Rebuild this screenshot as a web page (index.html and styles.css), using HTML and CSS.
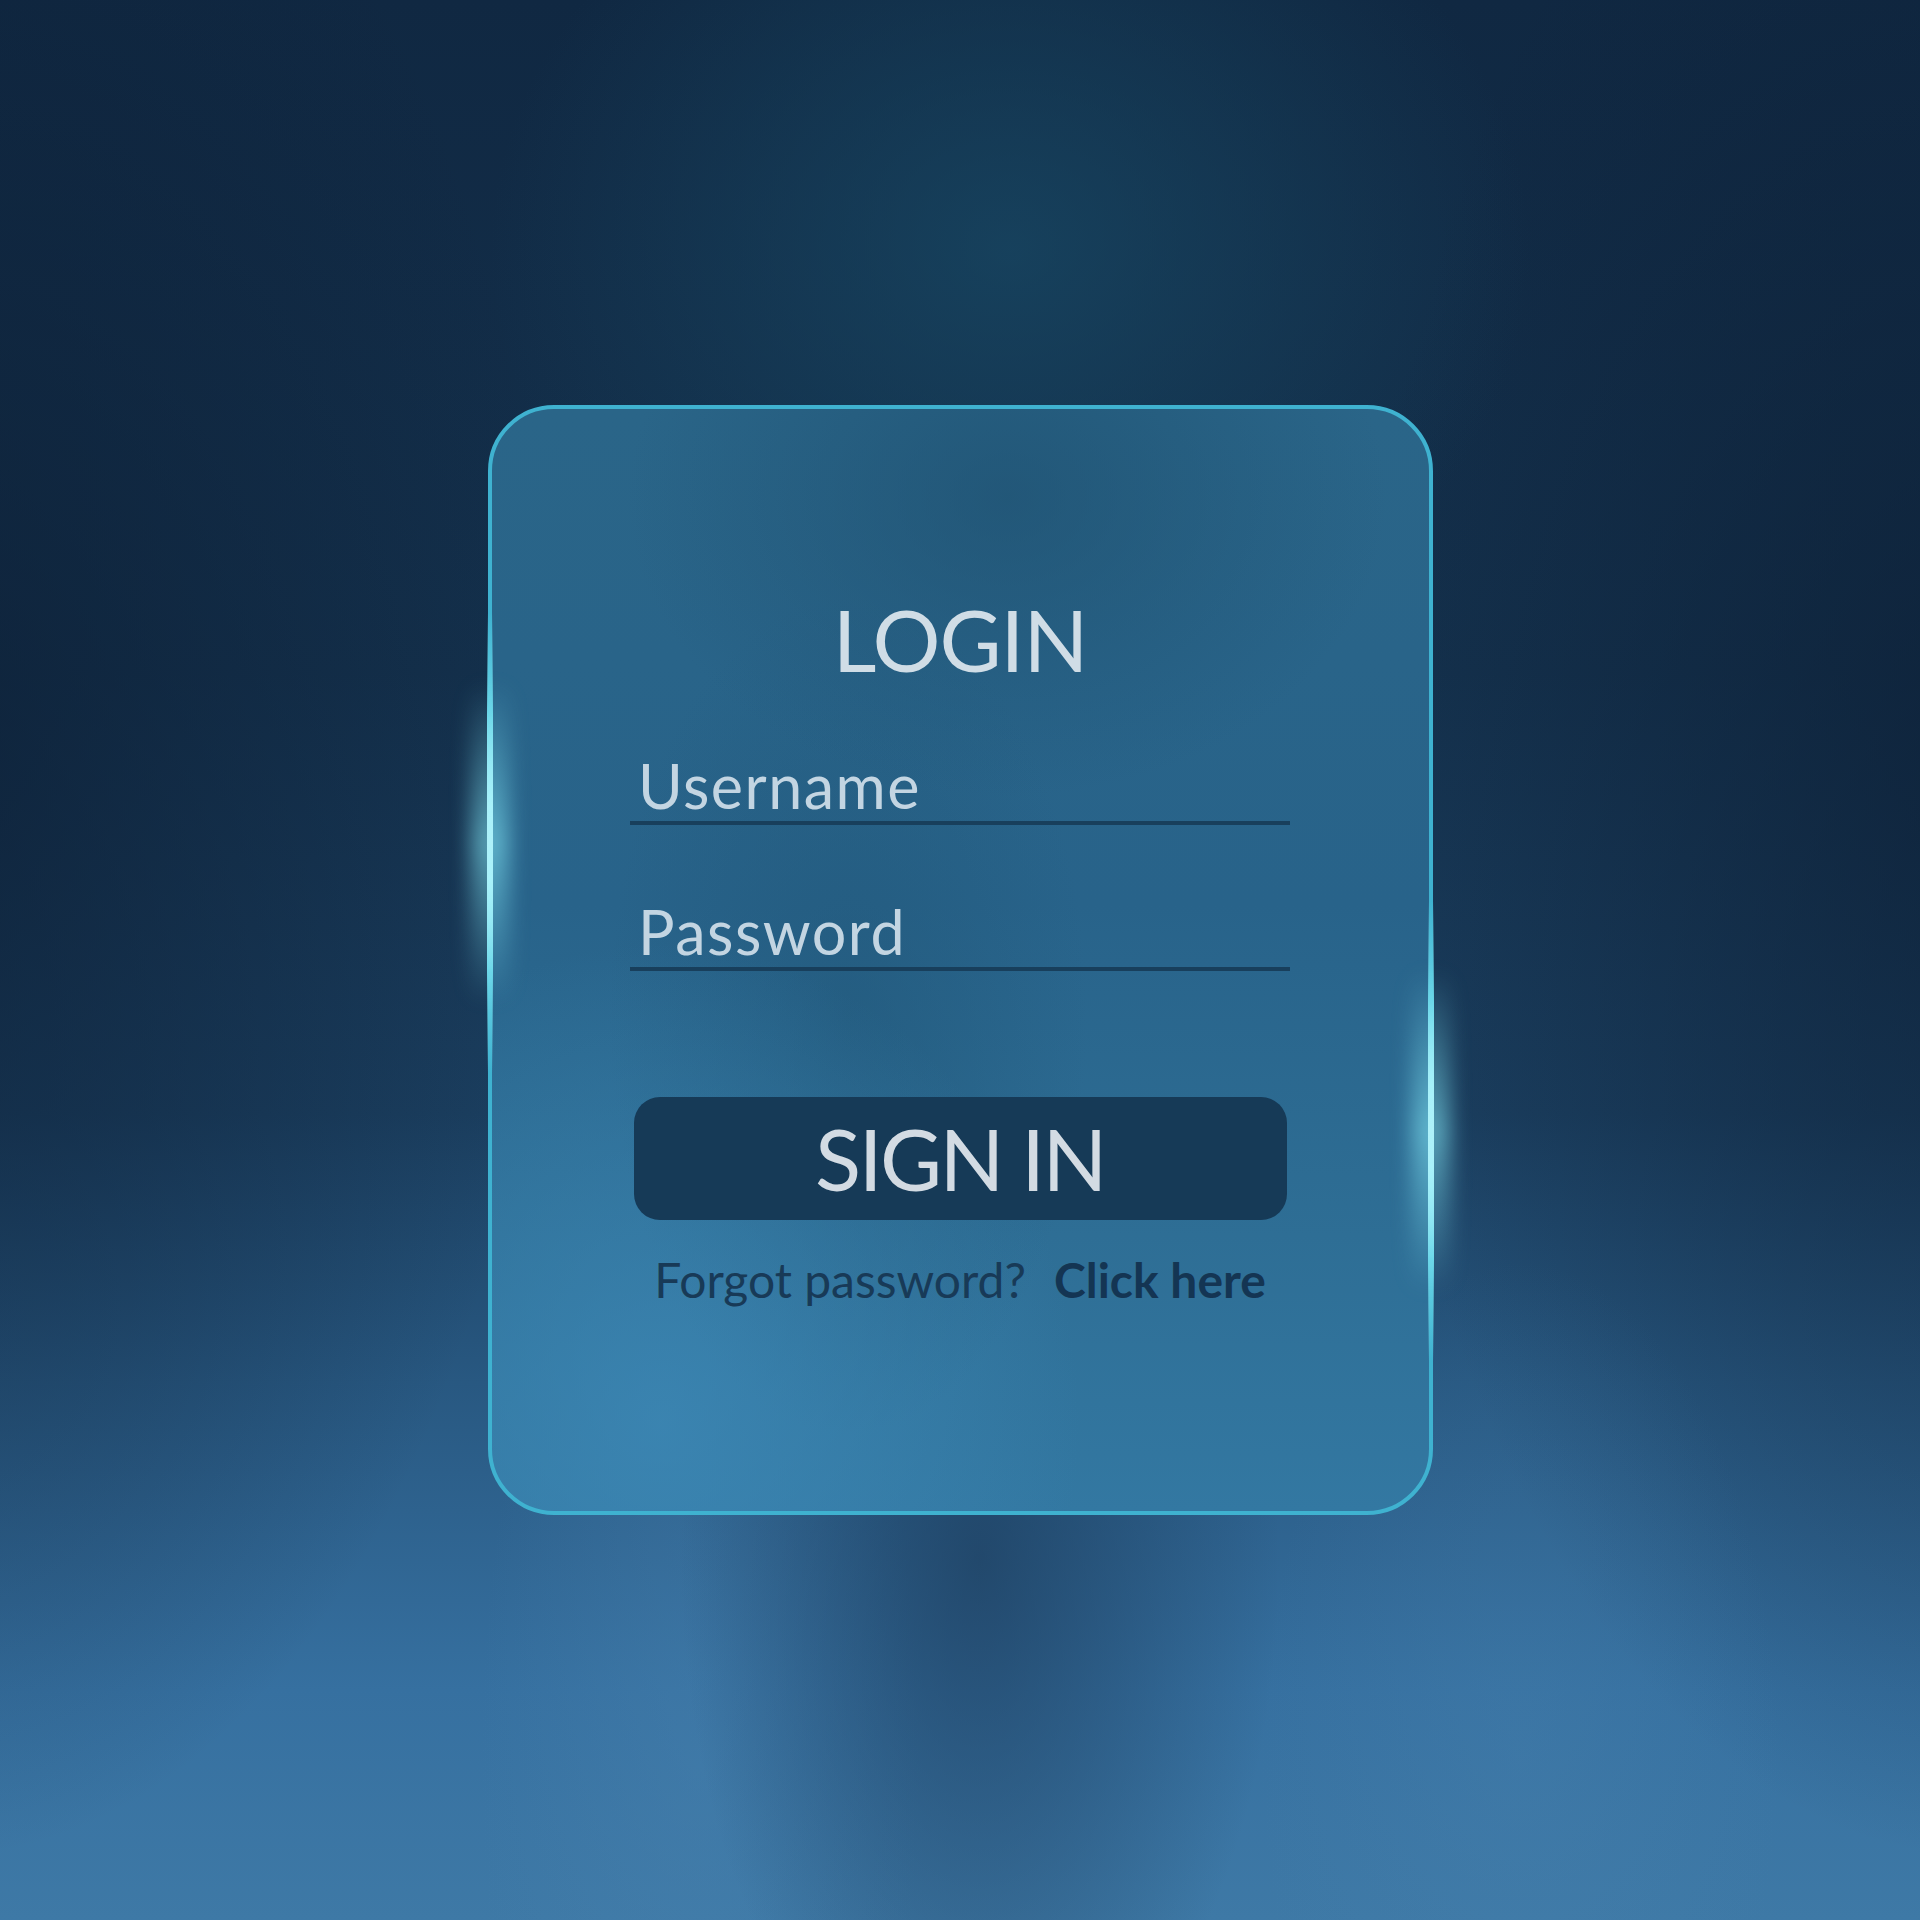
FILE: index.html
```html
<!DOCTYPE html>
<html lang="en">

<head>
    <meta charset="utf-8">
    <title>Login</title>
    <meta name="viewport" content="width=device-width, initial-scale=1">
    <link rel="stylesheet" href="styles.css">
</head>

<body>
    <div class="scene">
        <div class="card">
            <span class="glow glow-left"></span>
            <span class="glow glow-right"></span>

            <h1 class="title">LOGIN</h1>

            <div class="field">Username</div>
            <div class="field field-pass">Password</div>

            <button class="signin" type="button">SIGN IN</button>

            <p class="forgot">Forgot password?<a href="#">Click here</a></p>
        </div>
    </div>
</body>

</html>
```

FILE: styles.css
```css
* {
    margin: 0;
    padding: 0;
    box-sizing: border-box;
}

html,
body {
    width: 100%;
    height: 100%;
}

body {
    background: #112a45;
    font-family: "Lato", "Open Sans", sans-serif;
}

.scene {
    width: 1920px;
    height: 1920px;
    display: flex;
    align-items: center;
    justify-content: center;
    background:
        radial-gradient(ellipse 520px 440px at 1010px 250px, rgba(24, 72, 100, 0.75), rgba(24, 72, 100, 0)),
        radial-gradient(ellipse 300px 560px at 980px 1560px, rgba(28, 60, 92, 0.7), rgba(28, 60, 92, 0)),
        radial-gradient(ellipse 220px 620px at 700px 1760px, rgba(72, 130, 175, 0.4), rgba(72, 130, 175, 0)),
        radial-gradient(ellipse 260px 500px at 1520px 1760px, rgba(72, 130, 175, 0.3), rgba(72, 130, 175, 0)),
        radial-gradient(ellipse 620px 1100px at -60px 760px, rgba(12, 30, 52, 0.7), rgba(12, 30, 52, 0)),
        radial-gradient(ellipse 620px 1100px at 1980px 760px, rgba(12, 30, 52, 0.7), rgba(12, 30, 52, 0)),
        linear-gradient(to bottom, #102842 0%, #14314d 35%, #1b3f60 58%, #285881 72%, #3670a0 88%, #3e79a6 100%);
}

.card {
    position: relative;
    width: 945px;
    height: 1110px;
    border: 4px solid #3fb2d0;
    border-radius: 66px;
    display: flex;
    flex-direction: column;
    align-items: center;
    padding-top: 188px;
    background:
        radial-gradient(ellipse 420px 480px at 18% 92%, rgba(62, 138, 184, 0.7), rgba(62, 138, 184, 0)),
        radial-gradient(ellipse 380px 300px at 55% 8%, rgba(30, 80, 112, 0.65), rgba(30, 80, 112, 0)),
        radial-gradient(ellipse 240px 420px at 38% 55%, rgba(32, 86, 120, 0.55), rgba(32, 86, 120, 0)),
        linear-gradient(180deg, #2a6588 0%, #28638a 45%, #2e6e95 75%, #3378a2 100%);
}

/* light streaks on the edges */
.glow {
    position: absolute;
    width: 6px;
    height: 460px;
    pointer-events: none;
    background: linear-gradient(to bottom, rgba(140, 240, 250, 0), #6ad6e8 22%, #c8fcff 42%, #e4ffff 50%, #c8fcff 58%, #6ad6e8 78%, rgba(140, 240, 250, 0));
}

.glow::before {
    content: "";
    position: absolute;
    top: 15%;
    bottom: 15%;
    left: -16px;
    right: -16px;
    background: linear-gradient(to bottom, rgba(130, 230, 245, 0), rgba(130, 230, 245, 0.6) 50%, rgba(130, 230, 245, 0));
    filter: blur(10px);
}

.glow-left {
    left: -5px;
    top: 204px;
}

.glow-right {
    right: -5px;
    top: 492px;
}

.title {
    font-family: "Lato", sans-serif;
    font-weight: 400;
    font-size: 85px;
    line-height: 1;
    letter-spacing: -1px;
    color: #d0dde6;
}

.field {
    width: 660px;
    margin-top: 73px;
    padding: 0 0 5px 8px;
    border-bottom: 4px solid #183f5c;
    font-size: 61px;
    line-height: 1;
    letter-spacing: 1.5px;
    color: #c3d5e2;
}

.field-pass {
    margin-top: 76px;
}

.signin {
    width: 653px;
    height: 123px;
    margin-top: 126px;
    border: none;
    border-radius: 26px;
    background: #163a57;
    color: #d3dbe3;
    font-family: "Lato", sans-serif;
    font-size: 85px;
    line-height: 1;
    letter-spacing: -2.5px;
}

.forgot {
    margin-top: 36px;
    font-size: 48px;
    line-height: 1;
    color: #183a57;
}

.forgot a {
    margin-left: 28px;
    font-weight: 700;
    color: #143553;
    text-decoration: none;
}
```
